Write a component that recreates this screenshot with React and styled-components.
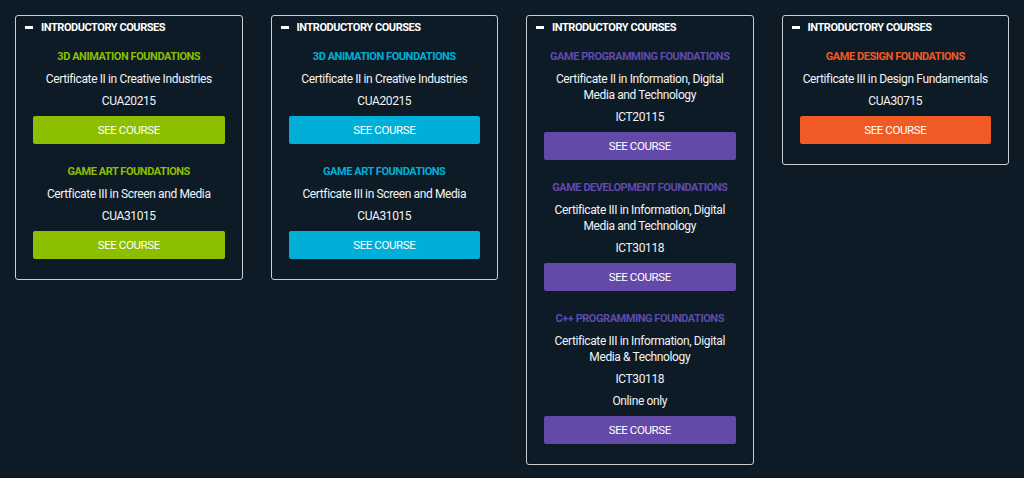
import styled, { createGlobalStyle } from 'styled-components';

const GlobalStyle = createGlobalStyle`
  html, body {
    margin: 0;
    padding: 0;
    background-color: #0d1b26;
    font-family: Roboto, 'Liberation Sans', sans-serif;
  }
`;

const Page = styled.div`
  display: flex;
  align-items: flex-start;
  gap: 28px;
  padding: 15px;
  min-height: 478px;
  box-sizing: border-box;
`;

const Card = styled.div`
  width: 228px;
  box-sizing: border-box;
  border: 1px solid #c9ced3;
  border-radius: 3px;
  color: #fff;
`;

const CardHeader = styled.div`
  display: flex;
  align-items: center;
  gap: 8px;
  height: 23px;
  padding: 0 9px;
  font-size: 11px;
  font-weight: 700;
  letter-spacing: -0.45px;
  text-transform: uppercase;
`;

const Minus = styled.span`
  display: block;
  width: 8px;
  height: 3px;
  background: #fff;
`;

const CardBody = styled.div`
  display: flex;
  flex-direction: column;
  gap: 20px;
  padding: 10px 17px 20px;
`;

const Course = styled.div`
  display: flex;
  flex-direction: column;
  gap: 6px;
  text-align: center;
`;

const CourseTitle = styled.div`
  color: ${(p) => p.$color};
  font-size: 11px;
  font-weight: 700;
  line-height: 16px;
  letter-spacing: -0.45px;
  text-transform: uppercase;
`;

const Line = styled.div`
  font-size: 12px;
  line-height: 16px;
  letter-spacing: -0.38px;
  color: #f2f4f5;
`;

const Button = styled.a`
  display: flex;
  align-items: center;
  justify-content: center;
  height: 28px;
  margin-top: 1px;
  border-radius: 2px;
  background: ${(p) => p.$color};
  color: #fff;
  font-size: 11.5px;
  letter-spacing: -0.4px;
  text-decoration: none;
  text-transform: uppercase;
`;

const GREEN = '#8bbf00';
const CYAN = '#00afd8';
const PURPLE = '#634aa8';
const PURPLE_TEXT = '#5f4aae';
const ORANGE = '#f05a24';

const columns = [
  {
    color: GREEN,
    courses: [
      { title: '3D Animation Foundations', lines: ['Certificate II in Creative Industries'], code: 'CUA20215' },
      { title: 'Game Art Foundations', lines: ['Certficate III in Screen and Media'], code: 'CUA31015' },
    ],
  },
  {
    color: CYAN,
    courses: [
      { title: '3D Animation Foundations', lines: ['Certificate II in Creative Industries'], code: 'CUA20215' },
      { title: 'Game Art Foundations', lines: ['Certficate III in Screen and Media'], code: 'CUA31015' },
    ],
  },
  {
    color: PURPLE,
    text: PURPLE_TEXT,
    courses: [
      {
        title: 'Game Programming Foundations',
        lines: ['Certificate II in Information, Digital', 'Media and Technology'],
        code: 'ICT20115',
      },
      {
        title: 'Game Development Foundations',
        lines: ['Certificate III in Information, Digital', 'Media and Technology'],
        code: 'ICT30118',
      },
      {
        title: 'C++ Programming Foundations',
        lines: ['Certificate III in Information, Digital', 'Media & Technology'],
        code: 'ICT30118',
        note: 'Online only',
      },
    ],
  },
  {
    color: ORANGE,
    courses: [
      { title: 'Game Design Foundations', lines: ['Certificate III in Design Fundamentals'], code: 'CUA30715' },
    ],
  },
];

export default function App() {
  return (
    <>
      <GlobalStyle />
      <Page>
        {columns.map((col, i) => (
          <Card key={i}>
            <CardHeader>
              <Minus />
              Introductory Courses
            </CardHeader>
            <CardBody>
              {col.courses.map((c, j) => (
                <Course key={j}>
                  <CourseTitle $color={col.text || col.color}>{c.title}</CourseTitle>
                  <Line>
                    {c.lines.map((l, k) => (
                      <div key={k}>{l}</div>
                    ))}
                  </Line>
                  <Line>{c.code}</Line>
                  {c.note && <Line>{c.note}</Line>}
                  <Button href="#" $color={col.color}>See Course</Button>
                </Course>
              ))}
            </CardBody>
          </Card>
        ))}
      </Page>
    </>
  );
}
